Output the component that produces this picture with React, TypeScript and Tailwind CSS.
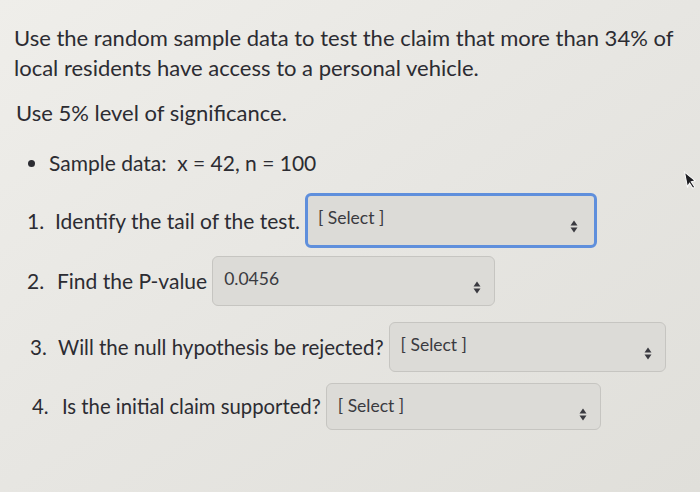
import React from "react";

function Arrows() {
  return (
    <svg width="8" height="13" viewBox="0 0 8 13" className="shrink-0">
      <path d="M4 0.5 L7.5 5.5 L0.5 5.5 Z" fill="#3a3a40" />
      <path d="M4 12.5 L7.5 7.5 L0.5 7.5 Z" fill="#3a3a40" />
    </svg>
  );
}

function Select({
  value,
  className,
  focused,
}: {
  value: string;
  className: string;
  focused?: boolean;
}) {
  return (
    <div
      className={
        "flex items-start justify-between rounded-[6px] bg-[#dcdbd7] " +
        (focused
          ? "border-[3px] border-[#5f8fdc] pl-[10px] pr-[16px] pt-[11px] "
          : "border border-[#c6c5c1] pl-[11px] pr-[13px] pt-[11px] ") +
        className
      }
    >
      <span className="text-[17.5px] leading-[22px] text-[#3a3a40]">{value}</span>
      <span className="mt-[13px]">
        <Arrows />
      </span>
    </div>
  );
}

export default function App() {
  return (
    <div className="relative w-[700px] h-[492px] overflow-hidden bg-linear-to-br from-[#efeeea] via-[#e7e6e2] to-[#e0dfda] font-['Lato','Noto_Sans',sans-serif] text-[#2c2c32]">
      <div className="flex flex-col pt-[23px]">
        <p className="pl-[14px] text-[22px] leading-[30px]">
          Use the random sample data to test the claim that more than 34% of
          <br />
          local residents have access to a personal vehicle.
        </p>
        <p className="mt-[15px] pl-[16px] text-[22px] leading-[30px]">
          Use 5% level of significance.
        </p>
        <div className="mt-[20px] flex items-center pl-[28px] text-[21px] leading-[30px]">
          <span className="mr-[14px] h-[7px] w-[7px] rounded-full bg-[#2c2c32]" />
          <span>Sample data:&nbsp; x = 42, n = 100</span>
        </div>

        <div className="mt-[15px] flex items-center pl-[27px] text-[21px]">
          <span className="w-[28px]">1.</span>
          <span className="mr-[5px]">Identify the tail of the test.</span>
          <Select value="[ Select ]" className="h-[55px] w-[292px]" focused />
        </div>

        <div className="mt-[8px] flex items-center pl-[27px] text-[21px]">
          <span className="w-[30px]">2.</span>
          <span className="mr-[5px]">Find the P-value</span>
          <Select value="0.0456" className="h-[50px] w-[283px]" />
        </div>

        <div className="mt-[16px] flex items-center pl-[30px] text-[20.5px]">
          <span className="w-[28px]">3.</span>
          <span className="mr-[5px]">Will the null hypothesis be rejected?</span>
          <Select value="[ Select ]" className="h-[50px] w-[277px]" />
        </div>

        <div className="mt-[11px] flex items-center pl-[32px] text-[20.3px]">
          <span className="w-[30px]">4.</span>
          <span className="mr-[5px]">Is the initial claim supported?</span>
          <Select value="[ Select ]" className="h-[47px] w-[275px]" />
        </div>
      </div>

      <svg
        className="absolute left-[682px] top-[170px]"
        width="16"
        height="22"
        viewBox="0 0 16 22"
      >
        <path
          d="M5 1 L13 12 L9 12 L11 18 L9 19 L7 13 L4 16 Z"
          fill="#1e1e22"
          stroke="#ffffff"
          strokeWidth="1"
          transform="rotate(-15 8 11)"
        />
      </svg>
    </div>
  );
}
